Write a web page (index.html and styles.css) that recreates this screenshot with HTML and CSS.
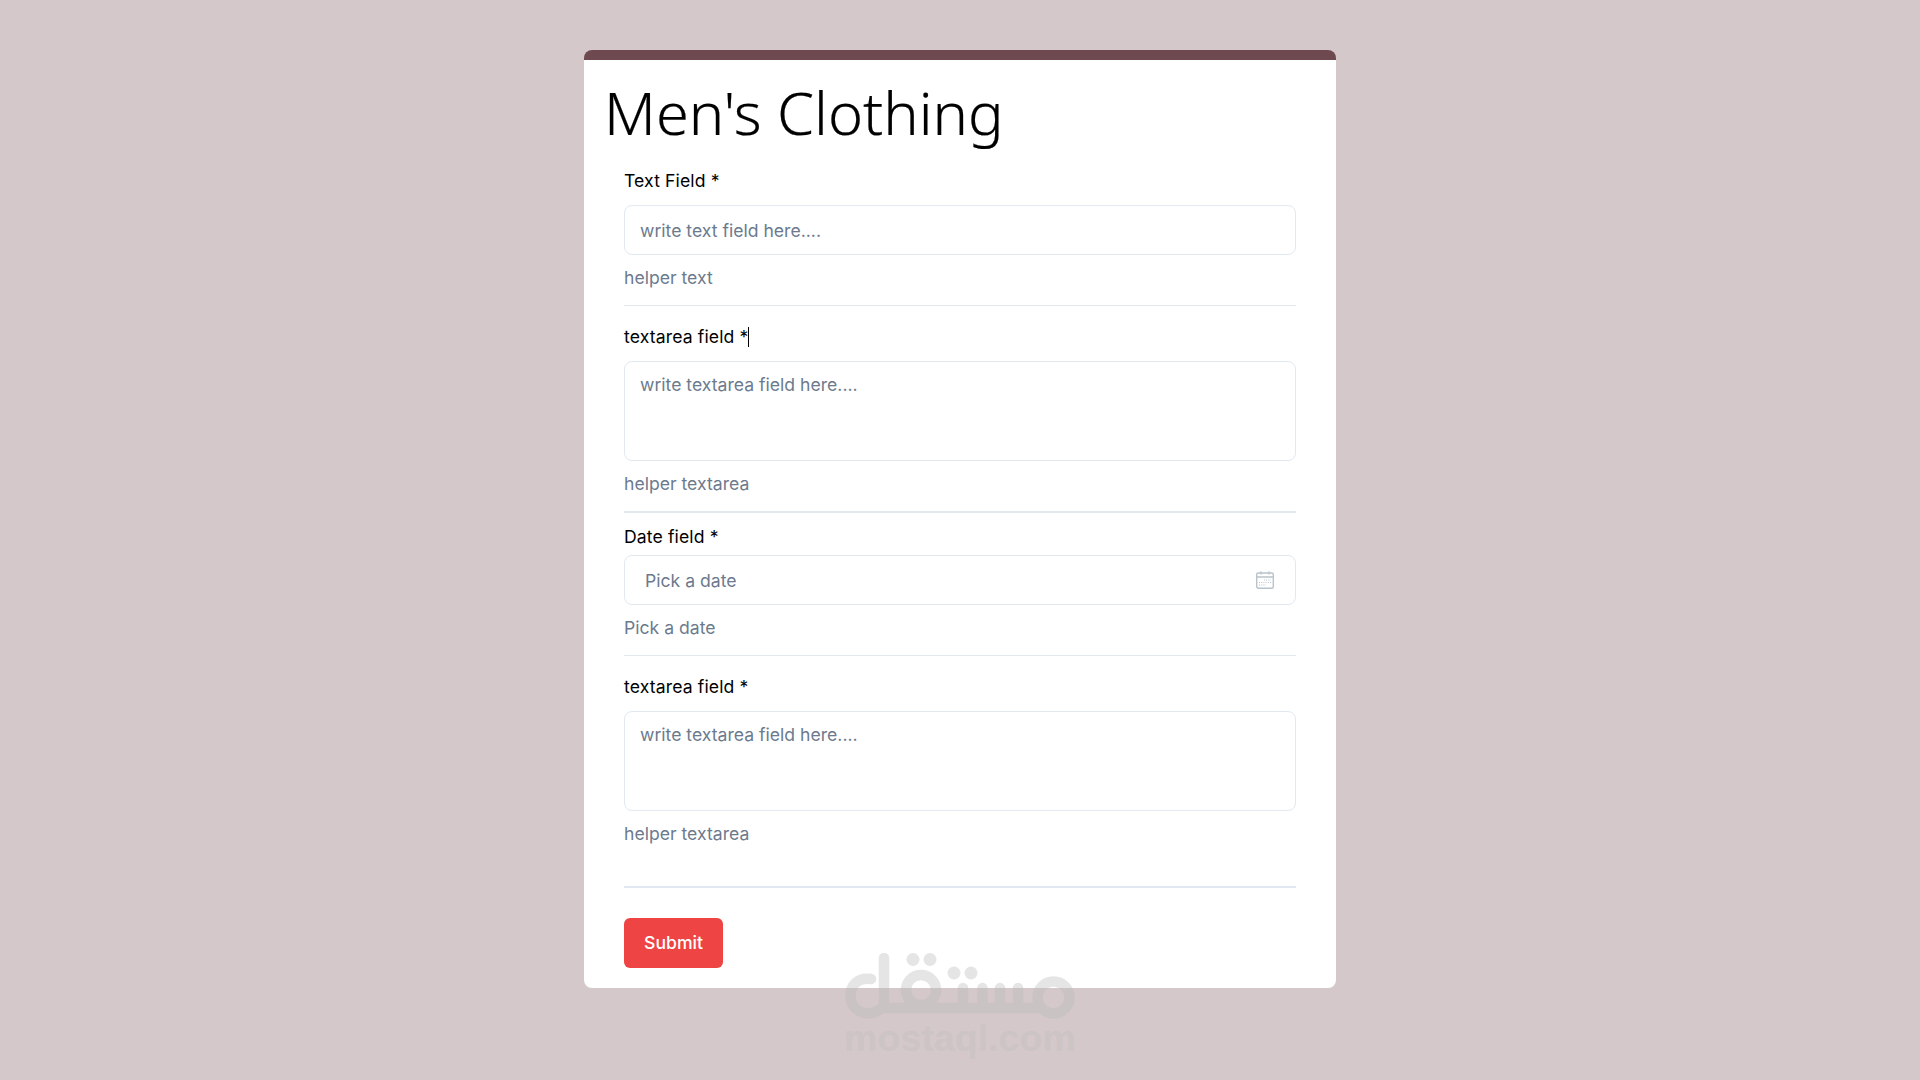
FILE: index.html
```html
<!DOCTYPE html>
<html lang="en">
<head>
<meta charset="utf-8">
<title>Men's Clothing</title>
<link rel="stylesheet" href="styles.css">
</head>
<body>
<main class="card">
  <h1 class="title">Men's Clothing</h1>
  <form class="form">
    <div class="field field-first">
      <label class="label">Text Field *</label>
      <div class="input"><span class="ph">write text field here....</span></div>
      <p class="helper">helper text</p>
    </div>
    <hr class="rule">
    <div class="field field-area">
      <label class="label">textarea field *<span class="caret"></span></label>
      <div class="area"><span class="ph">write textarea field here....</span></div>
      <p class="helper">helper textarea</p>
    </div>
    <hr class="rule rule-thick">
    <div class="field field-date">
      <label class="label">Date field *</label>
      <div class="input date"><span class="ph">Pick a date</span>
        <svg class="cal" viewBox="0 0 18 18" fill="none" stroke="#b9c3cc" stroke-width="1.4"><rect x="0.7" y="2" width="16.6" height="15.3" rx="1.5"/><path d="M0.7 6h16.6M5 0.5v3M13 0.5v3"/><path d="M8 9h7M3 11.5h12M3 14h7" stroke-width="1" stroke-dasharray="1 1.2"/></svg>
      </div>
      <p class="helper">Pick a date</p>
    </div>
    <hr class="rule">
    <div class="field field-area">
      <label class="label">textarea field *</label>
      <div class="area"><span class="ph">write textarea field here....</span></div>
      <p class="helper">helper textarea</p>
    </div>
    <hr class="rule rule-thick rule-last">
    <button class="submit" type="button">Submit</button>
  </form>
</main>
<div class="mark" aria-hidden="true">
  <svg class="mark-logo" viewBox="0 0 230 66" fill="none" stroke="#bbb" stroke-width="10.5" stroke-linecap="round" stroke-linejoin="round"><path d="M26 26C12 24 5.500 33 5.500 43 5.500 54 14 60.500 24 60.500 30 60.500 33 57 38 55H195"/><path d="M39 5V55"/><circle cx="76" cy="37" r="15"/><path d="M118 35V55M137.500 35V55M155 35V55M173 35V55"/><circle cx="208.500" cy="44.500" r="16"/><g fill="#bbb" stroke="none"><circle cx="68" cy="6.500" r="6.500"/><circle cx="85" cy="6.500" r="6.500"/><circle cx="109" cy="20" r="6.500"/><circle cx="126" cy="20" r="6.500"/></g></svg>
  <div class="mark-text">mostaql.com</div>
</div>
</body>
</html>
```
FILE: styles.css
```css
* { box-sizing: border-box; }
html, body { margin: 0; height: 100%; }
body {
  background: #d4c8ca;
  font-family: Inter, "Liberation Sans", sans-serif;
  overflow: hidden;
  position: relative;
}
.card {
  width: 752px;
  height: 938px;
  margin: 50px auto 0;
  background: #fff;
  border-top: 10px solid #6e4a50;
  border-radius: 8px;
  padding: 0 40px;
}
.title {
  margin: 0 0 0 -20px;
  padding-top: 7px;
  font-family: "Noto Sans", "Open Sans", sans-serif;
  font-weight: 300;
  font-size: 59.5px;
  line-height: 90px;
  color: #000;
  -webkit-text-stroke: 0.2px #000;
}
.form { display: flex; flex-direction: column; }
.field { display: flex; flex-direction: column; }
.field-first { padding-top: 12px; }
.field-area { padding-top: 19px; }
.field-date { padding-top: 12px; }
.label {
  font-size: 17.6px;
  font-weight: 400;
  letter-spacing: 0.12px;
  line-height: 24px;
  color: #000;
  display: block;
}
.caret {
  display: inline-block;
  width: 1px;
  height: 20px;
  background: #000;
  vertical-align: -4px;
}
.input {
  height: 50px;
  margin-top: 12px;
  border: 1px solid #e2e8f0;
  border-radius: 8px;
  padding: 1px 15px 0;
  display: flex;
  align-items: center;
}
.date { margin-top: 6px; padding: 1px 21px 0 20px; justify-content: space-between; }
.area {
  height: 100px;
  margin-top: 12px;
  border: 1px solid #e2e8f0;
  border-radius: 8px;
  padding: 11px 15px;
}
.ph { font-size: 17.6px; line-height: 24px; color: #6c7a8e; }
.cal { width: 18px; height: 18px; margin-top: -1px; }
.helper {
  margin: 11px 0 0;
  font-size: 17.6px;
  line-height: 24px;
  color: #6c7a8e;
}
.rule { width: 100%; margin: 15px 0 0; border: 0; height: 1px; background: #e2e8f0; }
.rule-thick { height: 2px; }
.rule-last { margin-top: 40px; }
.submit {
  width: 99px;
  height: 50px;
  margin-top: 30px;
  background: #ef4444;
  color: #fff;
  border: 0;
  border-radius: 6px;
  font-family: Inter, "Liberation Sans", sans-serif;
  font-size: 17.6px;
  font-weight: 500;
  padding: 0 0 2px;
}
.mark {
  position: absolute;
  left: 845px;
  top: 953px;
  width: 230px;
  display: flex;
  flex-direction: column;
  align-items: center;
}
.mark-logo { width: 230px; height: 66px; opacity: 0.37; }
.mark-text {
  font-family: "Liberation Sans", sans-serif;
  font-weight: 700;
  font-size: 37.6px;
  line-height: 38px;
  color: #bbb;
  opacity: 0.3;
}
```
